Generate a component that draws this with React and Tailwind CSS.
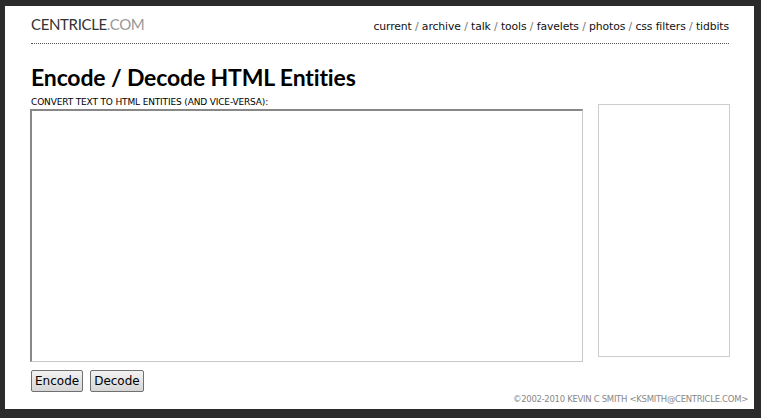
import React from 'react';

const navLinks = ['current', 'archive', 'talk', 'tools', 'favelets', 'photos', 'css filters', 'tidbits'];

const App = () => {
  return (
    <div className="h-[418px] w-[761px] bg-[#2b2b2b] pt-[6px] pl-[5px] pr-[7px] pb-[9px]">
      <div className="flex h-full flex-col bg-white pl-[26px] pr-[25px] font-['DejaVu_Sans',sans-serif] text-[#111]">
        {/* header */}
        <div className="flex h-[38px] items-end justify-between border-b border-dotted border-[#555] pb-[9px]">
          <div className="mb-[1px] font-['Lato',sans-serif] text-[15px] leading-[18px] tracking-[-0.35px] text-[#333]">
            CENTRICLE<span className="text-[#999]">.COM</span>
          </div>
          <div className="text-[10.8px] leading-[15px] tracking-[-0.1px] text-[#111]">
            {navLinks.map((link, i) => (
              <span key={link}>
                {link}
                {i < navLinks.length - 1 && <span className="text-[#777]"> / </span>}
              </span>
            ))}
          </div>
        </div>

        {/* title */}
        <h1 className="mt-[20px] font-['Lato',sans-serif] text-[23px] font-bold leading-[26px] tracking-[-0.15px] text-black">
          Encode / Decode HTML Entities
        </h1>

        {/* main */}
        <div className="mt-[6px] flex items-start gap-[15px]">
          <div className="flex shrink-0 flex-col">
            <label className="h-[13px] text-[9px] leading-[12px] tracking-[-0.15px] text-black">
              CONVERT TEXT TO HTML ENTITIES (AND VICE-VERSA):
            </label>
            <textarea className="-ml-px h-[253px] w-[553px] resize-none border-t-2 border-l-2 border-r border-b border-t-[#888] border-l-[#888] border-r-[#c8c8c8] border-b-[#c8c8c8] bg-white outline-none" />
          </div>
          <div className="mt-[8px] h-[253px] w-[132px] shrink-0 border border-[#ccc]" />
        </div>

        {/* buttons + footer */}
        <div className="mt-[8px] flex items-start justify-between">
          <div className="flex gap-[7px]">
            <button className="h-[22px] rounded-[2px] border border-[#707070] bg-gradient-to-b from-[#f2f2f2] to-[#d6d6d6] px-[3px] text-[12px] leading-[18px] text-black">
              Encode
            </button>
            <button className="h-[22px] rounded-[2px] border border-[#707070] bg-gradient-to-b from-[#f2f2f2] to-[#d6d6d6] px-[3px] text-[12px] leading-[18px] text-black">
              Decode
            </button>
          </div>
          <div className="-mr-[19px] mt-[24px] text-[8.5px] leading-[10px] tracking-[-0.3px] text-[#888]">
            ©2002-2010 KEVIN C SMITH &lt;KSMITH@CENTRICLE.COM&gt;
          </div>
        </div>
      </div>
    </div>
  );
};

export default App;
